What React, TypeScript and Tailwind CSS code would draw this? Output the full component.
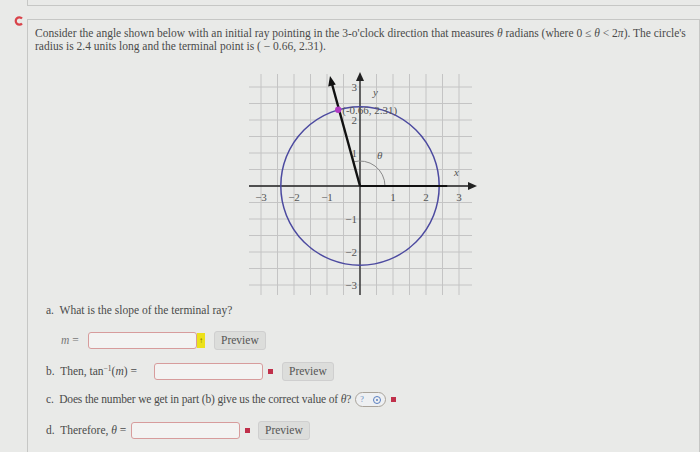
import React from 'react';

const U = 33;
const O = 120;

function Graph() {
  const steps = Array.from({ length: 13 }, (_, i) => (i - 6) * (U / 2));
  const xs = [-3, -2, -1, 1, 2, 3];
  const ys = [3, 2, 1, -1, -2, -3];
  const px = O - 0.66 * U;
  const py = O - 2.31 * U;
  const a = (106 * Math.PI) / 180;
  return (
    <svg width="240" height="240" viewBox="0 0 240 240" className="block">
      {steps.map((s, i) => (
        <line key={'v' + i} x1={O + s} y1={8} x2={O + s} y2={229} stroke="#c4c4c4" strokeWidth="1" />
      ))}
      {steps.map((s, i) => (
        <line key={'h' + i} x1={9} y1={O + s} x2={232} y2={O + s} stroke="#c4c4c4" strokeWidth="1" />
      ))}
      {/* axes */}
      <line x1={9} y1={O} x2={230} y2={O} stroke="#222" strokeWidth="1.3" />
      <polygon points="237,120 228,116 228,124" fill="#222" />
      <line x1={O} y1={229} x2={O} y2={13} stroke="#222" strokeWidth="1.3" />
      <polygon points="120,6 116,15 124,15" fill="#222" />
      {/* circle */}
      <circle cx={O} cy={O} r={2.4 * U} fill="none" stroke="#4c4aa0" strokeWidth="1.5" />
      {/* angle arc */}
      <path
        d={`M ${O + 25} ${O} A 25 25 0 0 0 ${O + 25 * Math.cos(a)} ${O - 25 * Math.sin(a)}`}
        fill="none"
        stroke="#8a8a8a"
        strokeWidth="1"
      />
      {/* rays */}
      <line x1={O} y1={O} x2={O + 2.4 * U + 8} y2={O} stroke="#111" strokeWidth="2.2" />
      <line x1={O} y1={O} x2={92} y2={18} stroke="#111" strokeWidth="2.4" />
      <polygon points="90,10 88.2,20.6 95.8,18.6" fill="#111" />
      <circle cx={px} cy={py} r="3.2" fill="#b23bc4" />
      <g fontFamily="'Liberation Serif', serif" fontSize="11" fill="#555">
        <text x={px + 4} y={py + 4}>(-0.66, 2.31)</text>
        {xs.map((n) => (
          <text key={'x' + n} x={O + n * U} y={135} textAnchor="middle">
            {n < 0 ? '\u2212' + -n : n}
          </text>
        ))}
        {ys.map((n) => (
          <text key={'y' + n} x={117} y={O - n * U + 4} textAnchor="end">
            {n < 0 ? '\u2212' + -n : n}
          </text>
        ))}
        <text x={133} y={30} fontStyle="italic">y</text>
        <text x={214} y={110} fontStyle="italic">x</text>
        <text x={137} y={93} fontStyle="italic">θ</text>
      </g>
    </svg>
  );
}

function Field({ w }: { w: string }) {
  return <div className={`${w} h-[17px] rounded-[3px] border border-[#d79c9c] bg-[#f3f3f2]`} />;
}

function Preview({ ml }: { ml: string }) {
  return (
    <div
      className={`${ml} h-[19px] px-[6px] flex items-center rounded-[3px] border border-[#cfcfcf] bg-[#dcdddb] text-[11.5px] text-[#555]`}
    >
      Preview
    </div>
  );
}

function Mark() {
  return <div className="ml-[5px] w-[5px] h-[5px] bg-[#c0304a]" />;
}

export default function App() {
  return (
    <div className="w-[700px] h-[452px] overflow-hidden bg-[#e9eae8] font-['Liberation_Serif',serif] text-[#4a4a4a]">
      <div className="ml-[27px] h-[6px] border-l border-b border-[#c6c7c5]" />
      <div className="flex mt-[13px] h-[433px]">
        <div className="w-[27px] pl-[14px] -mt-[3px]">
          <svg width="10" height="10" viewBox="0 0 10 10" className="block">
            <path d="M8 2.6 A3.6 3.6 0 1 0 8 7.4" fill="none" stroke="#d9434a" strokeWidth="2.2" />
          </svg>
        </div>
        <div className="flex-1 border-l border-t border-r border-[#c6c7c5] pl-[7px] pt-[7px]">
          <p className="text-[11.5px] leading-[12.5px] whitespace-nowrap">
            Consider the angle shown below with an initial ray pointing in the 3-o'clock direction that measures{' '}
            <i>θ</i> radians (where 0 ≤ <i>θ</i> &lt; 2<i>π</i>). The circle's
            <br />
            radius is 2.4 units long and the terminal point is ( − 0.66, 2.31).
          </p>
          <div className="ml-[205px] mt-[14px]">
            <Graph />
          </div>
          <div className="ml-[11px] text-[11.5px]">
            <div className="-mt-[2px] leading-[12px]">a.&nbsp; What is the slope of the terminal ray?</div>
            <div className="flex items-center mt-[15px] ml-[15px]">
              <span className="w-[27px] text-[#777]">
                <i>m</i> =
              </span>
              <Field w="w-[109px]" />
              <div className="w-[8px] h-[15px] bg-[#ece11a] flex items-center justify-center text-[8px] leading-none text-[#7a6a00]">
                ↑
              </div>
              <Preview ml="ml-[9px]" />
            </div>
            <div className="flex items-center mt-[12px]">
              <span className="w-[108px]">
                b.&nbsp; Then, tan<sup className="text-[7.5px]">−1</sup>(<i>m</i>) =
              </span>
              <Field w="w-[109px]" />
              <Mark />
              <Preview ml="ml-[9px]" />
            </div>
            <div className="flex items-center mt-[10px]">
              <span className="tracking-[-0.15px]">
                c.&nbsp; Does the number we get in part (b) give us the correct value of <i>θ</i>?
              </span>
              <div className="ml-[4px] w-[31px] h-[15px] rounded-full border border-[#a9a39a] bg-[#eef0f2] flex items-center justify-between px-[4px]">
                <span className="text-[8px] text-[#5a7fc0] leading-none">?</span>
                <span className="w-[8px] h-[8px] rounded-full border border-[#5a7fc0] flex items-center justify-center">
                  <span className="w-[2px] h-[2px] rounded-full bg-[#5a7fc0]" />
                </span>
              </div>
              <Mark />
            </div>
            <div className="flex items-center mt-[13px]">
              <span className="w-[85px]">
                d.&nbsp; Therefore, <i>θ</i> =
              </span>
              <Field w="w-[109px]" />
              <Mark />
              <Preview ml="ml-[8px]" />
            </div>
          </div>
        </div>
      </div>
    </div>
  );
}
